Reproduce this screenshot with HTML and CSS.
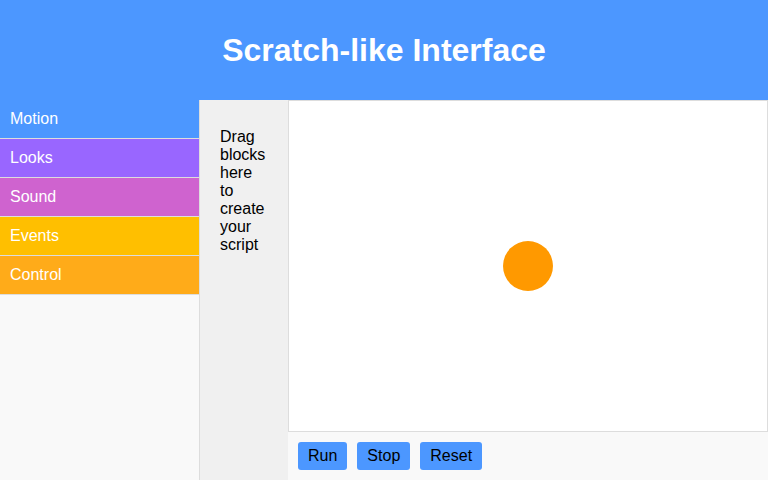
FILE: index.html
```html
<!DOCTYPE html>
<html lang="en">
<head>
    <meta charset="UTF-8">
    <meta name="viewport" content="width=device-width, initial-scale=1.0">
    <title>Scratch-like Interface</title>
    <link rel="stylesheet" href="styles.css">
</head>
<body>
    <header class="header">
        <h1>Scratch-like Interface</h1>
    </header>

    <div class="main">
        <div class="side-panel">
            <div class="category motion">Motion</div>
            <div class="category looks">Looks</div>
            <div class="category sound">Sound</div>
            <div class="category events">Events</div>
            <div class="category control">Control</div>
        </div>

        <div class="script-area">
            <p>Drag blocks here to create your script</p>
        </div>

        <div class="stage-column">
            <div class="stage">
                <div class="sprite"></div>
            </div>
            <div class="controls">
                <button>Run</button>
                <button>Stop</button>
                <button>Reset</button>
            </div>
        </div>
    </div>
</body>
</html>
```

FILE: styles.css
```css
body {
    margin: 0;
    padding: 0;
    font-family: "Liberation Sans", Arial, sans-serif;
    font-size: 16px;
}

.header {
    background-color: #4c97ff;
    color: white;
    height: 100px;
    display: flex;
    align-items: center;
    justify-content: center;
}

.header h1 {
    margin: 0;
    font-size: 32px;
}

.main {
    display: flex;
    height: 380px;
}

.side-panel {
    width: 200px;
    box-sizing: border-box;
    background-color: #f9f9f9;
    border-right: 1px solid #ddd;
}

.category {
    color: white;
    padding: 10px;
    line-height: 18px;
    border-bottom: 1px solid #ddd;
}

.motion { background-color: #4c97ff; }
.looks { background-color: #9966ff; }
.sound { background-color: #cf63cf; }
.events { background-color: #ffbf00; }
.control { background-color: #ffab19; }

.script-area {
    flex: 1;
    background-color: #f0f0f0;
    padding: 20px;
}

.script-area p {
    margin: 8px 0;
    line-height: 18px;
}

.stage-column {
    width: 480px;
    display: flex;
    flex-direction: column;
}

.stage {
    position: relative;
    height: 332px;
    box-sizing: border-box;
    background: white;
    border: 1px solid #ddd;
}

.sprite {
    position: absolute;
    left: 50%;
    top: 50%;
    width: 50px;
    height: 50px;
    margin: -25px 0 0 -25px;
    border-radius: 50%;
    background-color: #ff9900;
}

.controls {
    flex: 1;
    background-color: #f9f9f9;
    padding: 10px;
    display: flex;
    gap: 10px;
    align-items: flex-start;
}

.controls button {
    background-color: #4c97ff;
    color: #000;
    border: none;
    border-radius: 3px;
    padding: 5px 10px;
    font-family: "Liberation Sans", Arial, sans-serif;
    font-size: 16px;
    line-height: 18px;
    cursor: pointer;
}
```
